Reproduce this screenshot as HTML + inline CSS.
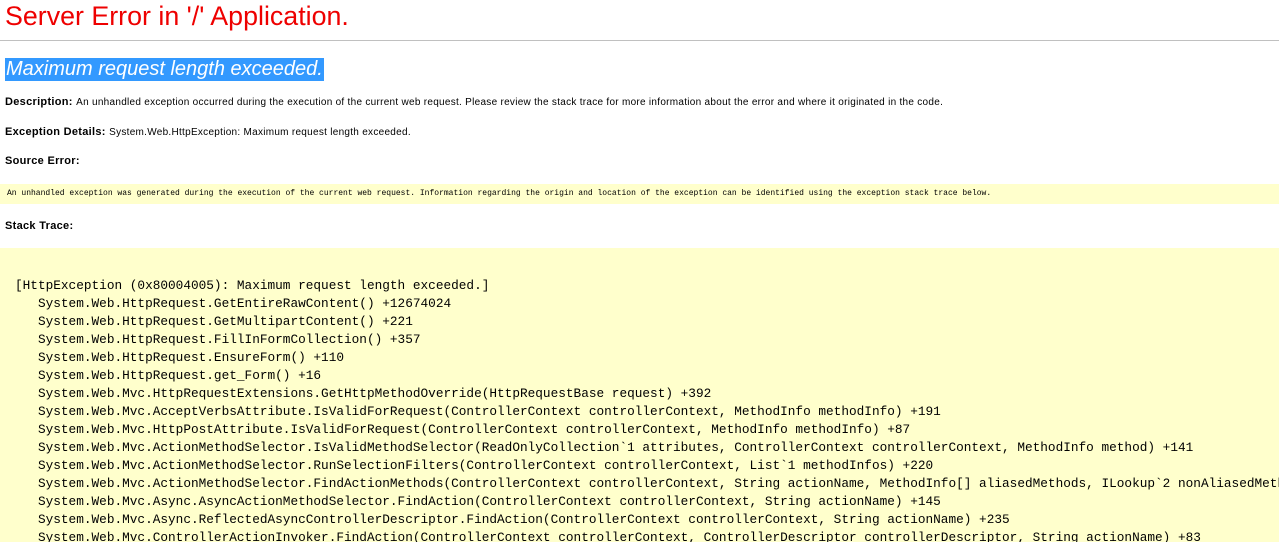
<!DOCTYPE html>
<html><head><meta charset="utf-8"><style>
html,body{margin:0;padding:0;background:#fff;width:1279px;height:542px;overflow:hidden;position:relative;font-family:"Liberation Sans",Verdana,sans-serif;color:#000}
.a{position:absolute;white-space:pre;margin:0}
.t{left:5px;top:1px;font-size:26.8px;color:#e00;line-height:30px}
.hr{left:0;top:40px;width:1279px;height:0;border-top:1px solid #c0c0c0}
.h2{left:5px;top:58px;height:23px;line-height:23px;font-size:20px;font-style:italic;background:#3399ff;color:#fff;padding:0 1px 0 1px}
.s{left:5px;font-size:10px;letter-spacing:0.28px}
.s b{font-size:11px;letter-spacing:0.3px}
.y1{left:0;top:184px;width:1279px;height:20px;background:#ffffcc}
.src{left:7px;top:189px;font-family:"Liberation Mono",monospace;font-size:8px;line-height:10px}
.y2{left:0;top:248px;width:1279px;height:300px;background:#ffffcc}
.st{left:15px;top:277px;width:1264px;overflow:hidden;font-family:"Liberation Mono",monospace;font-size:12.75px;line-height:18px;color:#000}
</style></head><body>
<div class="a t">Server Error in '/' Application.</div>
<div class="a hr"></div>
<div class="a h2">Maximum request length exceeded.</div>
<div class="a s" style="top:96px"><b>Description: </b>An unhandled exception occurred during the execution of the current web request. Please review the stack trace for more information about the error and where it originated in the code.</div>
<div class="a s" style="top:126px"><b>Exception Details: </b>System.Web.HttpException: Maximum request length exceeded.</div>
<div class="a s" style="top:155px"><b>Source Error:</b></div>
<div class="a y1"></div>
<div class="a src">An unhandled exception was generated during the execution of the current web request. Information regarding the origin and location of the exception can be identified using the exception stack trace below.</div>
<div class="a s" style="top:220px"><b>Stack Trace:</b></div>
<div class="a y2"></div>
<div class="a st">[HttpException (0x80004005): Maximum request length exceeded.]
   System.Web.HttpRequest.GetEntireRawContent() +12674024
   System.Web.HttpRequest.GetMultipartContent() +221
   System.Web.HttpRequest.FillInFormCollection() +357
   System.Web.HttpRequest.EnsureForm() +110
   System.Web.HttpRequest.get_Form() +16
   System.Web.Mvc.HttpRequestExtensions.GetHttpMethodOverride(HttpRequestBase request) +392
   System.Web.Mvc.AcceptVerbsAttribute.IsValidForRequest(ControllerContext controllerContext, MethodInfo methodInfo) +191
   System.Web.Mvc.HttpPostAttribute.IsValidForRequest(ControllerContext controllerContext, MethodInfo methodInfo) +87
   System.Web.Mvc.ActionMethodSelector.IsValidMethodSelector(ReadOnlyCollection`1 attributes, ControllerContext controllerContext, MethodInfo method) +141
   System.Web.Mvc.ActionMethodSelector.RunSelectionFilters(ControllerContext controllerContext, List`1 methodInfos) +220
   System.Web.Mvc.ActionMethodSelector.FindActionMethods(ControllerContext controllerContext, String actionName, MethodInfo[] aliasedMethods, ILookup`2 nonAliasedMethods) +135
   System.Web.Mvc.Async.AsyncActionMethodSelector.FindAction(ControllerContext controllerContext, String actionName) +145
   System.Web.Mvc.Async.ReflectedAsyncControllerDescriptor.FindAction(ControllerContext controllerContext, String actionName) +235
   System.Web.Mvc.ControllerActionInvoker.FindAction(ControllerContext controllerContext, ControllerDescriptor controllerDescriptor, String actionName) +83</div>
</body></html>
